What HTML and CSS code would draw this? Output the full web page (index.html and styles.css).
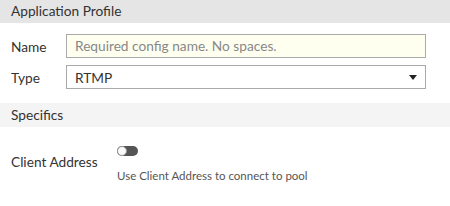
FILE: index.html
```html
<!DOCTYPE html>
<html>
    <head>
        <title>Application Profile</title>
        <meta charset="UTF-8">
        <link rel="stylesheet" href="styles.css">
    </head>
    <body>
        <div class="section-head">Application Profile</div>
        <div class="form">
            <div class="row">
                <label class="label">Name</label>
                <div class="field input">Required config name. No spaces.</div>
            </div>
            <div class="row">
                <label class="label">Type</label>
                <div class="field select">
                    <span>RTMP</span>
                    <span class="caret"></span>
                </div>
            </div>
        </div>
        <div class="section-head light">Specifics</div>
        <div class="toggle-row">
            <label class="label wide">Client Address</label>
            <div class="toggle-col">
                <span class="toggle"><span class="knob"></span></span>
                <div class="help">Use Client Address to connect to pool</div>
            </div>
        </div>
    </body>
</html>
```

FILE: styles.css
```css
body
{
    margin: 0;
    font-family: Lato, "Open Sans", sans-serif;
    font-size: 13.7px;
    color: #333;
    background: #fff;
}
.section-head
{
    height: 23px;
    line-height: 21px;
    padding-left: 11px;
    background: #e5e5e5;
}
.section-head.light
{
    height: 24px;
    line-height: 23px;
    margin-top: 14px;
    background: #f4f4f4;
}
.form
{
    padding-top: 11px;
    display: flex;
    flex-direction: column;
    gap: 7px;
}
.row
{
    display: flex;
    align-items: center;
}
.label
{
    width: 55px;
    padding-left: 11px;
    color: #333;
}
.field
{
    width: 360px;
    height: 24px;
    box-sizing: border-box;
    border: 1px solid #aaa;
    padding-left: 8px;
    line-height: 21px;
}
.input
{
    background: #fffff0;
    color: #888;
}
.select
{
    display: flex;
    justify-content: space-between;
    align-items: center;
    padding-right: 8px;
}
.caret
{
    width: 0;
    height: 0;
    border-left: 4px solid transparent;
    border-right: 4px solid transparent;
    border-top: 5px solid #222;
}
.toggle-row
{
    display: flex;
    padding-top: 19px;
}
.label.wide
{
    width: 105px;
    padding-top: 7px;
}
.toggle-col
{
    padding-left: 1px;
}
.toggle
{
    display: block;
    position: relative;
    width: 21px;
    height: 10px;
    border-radius: 5px;
    background: #555;
}
.knob
{
    position: absolute;
    left: 0;
    top: 0;
    width: 10px;
    height: 10px;
    box-sizing: border-box;
    border-radius: 50%;
    background: #fafafa;
    border: 1px solid #999;
}
.help
{
    margin-top: 13px;
    font-size: 11.5px;
    color: #555;
}
```
